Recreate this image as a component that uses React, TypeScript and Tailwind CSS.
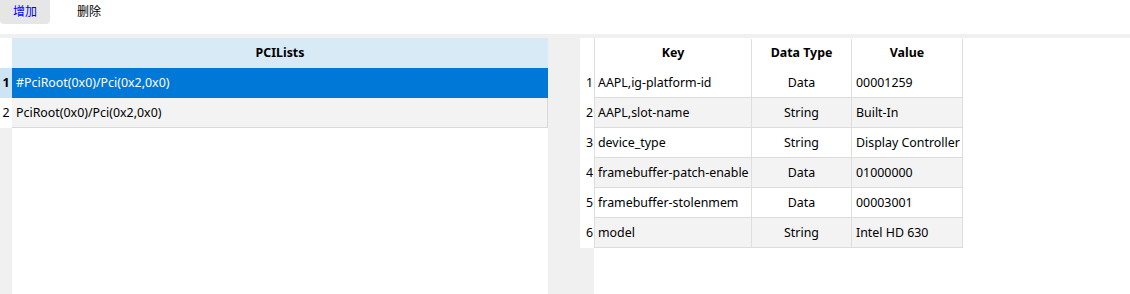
const pciRows = ['#PciRoot(0x0)/Pci(0x2,0x0)', 'PciRoot(0x0)/Pci(0x2,0x0)']

const props = [
  { key: 'AAPL,ig-platform-id', type: 'Data', value: '00001259' },
  { key: 'AAPL,slot-name', type: 'String', value: 'Built-In' },
  { key: 'device_type', type: 'String', value: 'Display Controller' },
  { key: 'framebuffer-patch-enable', type: 'Data', value: '01000000' },
  { key: 'framebuffer-stolenmem', type: 'Data', value: '00003001' },
  { key: 'model', type: 'String', value: 'Intel HD 630' },
]

export default function App() {
  return (
    <div
      className="flex h-[294px] w-full flex-col bg-white text-[12.4px] text-black"
      style={{ fontFamily: '"Noto Sans", "Noto Sans CJK SC", sans-serif' }}
    >
      {/* Toolbar */}
      <div className="flex h-[34px] items-start">
        <button className="flex h-6 w-[50px] items-center justify-center rounded-b bg-[#e6e6e6] text-[12px] text-[#0000ff]">
          增加
        </button>
        <button className="ml-[14px] flex h-6 w-[50px] items-center justify-center text-[12px]">删除</button>
      </div>
      <div className="h-1 bg-[#f0f0f0]" />

      <div className="flex flex-1">
        {/* PCI list */}
        <div className="flex w-[548px]">
          <div className="flex w-3 flex-col">
            <div className="h-[30px] bg-white" />
            <div className="flex h-[30px] items-center justify-center bg-[#cde4f5] pt-px font-bold">1</div>
            <div className="flex h-[30px] items-center justify-center bg-white pt-px">2</div>
            <div className="flex-1 bg-[#f0f0f0]" />
          </div>
          <div className="flex flex-1 flex-col">
            <div className="flex h-[30px] items-center justify-center bg-[#d9eaf7] pt-px font-bold">PCILists</div>
            {pciRows.map((r, i) => (
              <div
                key={r}
                className={
                  i === 0
                    ? 'flex h-[30px] items-center bg-[#0078d7] pt-px pl-1 text-white'
                    : 'flex h-[30px] items-center border-r border-b border-[#d9d9d9] bg-[#f3f3f3] pt-px pl-1'
                }
              >
                {r}
              </div>
            ))}
          </div>
        </div>

        <div className="w-8 bg-[#f0f0f0]" />

        {/* Properties */}
        <div className="flex flex-1">
          <div className="flex w-[14px] flex-col">
            <div className="h-[30px] bg-white" />
            {props.map((p, i) => (
              <div key={p.key} className="flex h-[30px] items-center justify-end bg-white pt-px pr-px">
                {i + 1}
              </div>
            ))}
            <div className="flex-1 bg-[#f0f0f0]" />
          </div>
          <div className="flex w-[369px] flex-col self-start border-l border-[#dedede]">
            <div className="grid h-[30px] grid-cols-[157px_100px_111px] pt-px font-bold">
              <div className="flex items-center justify-center border-r border-[#dedede]">Key</div>
              <div className="flex items-center justify-center border-r border-[#dedede]">Data Type</div>
              <div className="flex items-center justify-center border-r border-[#dedede]">Value</div>
            </div>
            {props.map((p, i) => (
              <div
                key={p.key}
                className={`grid h-[30px] grid-cols-[157px_100px_111px] border-b border-[#dcdcdc] ${
                  i % 2 === 1 ? 'bg-[#f3f3f3]' : 'bg-white'
                }`}
              >
                <div className="flex items-center border-r border-[#dedede] pt-px pl-[3px] whitespace-nowrap">{p.key}</div>
                <div className="flex items-center justify-center border-r border-[#dedede] pt-px">{p.type}</div>
                <div className="flex items-center border-r border-[#dedede] pt-px pl-[4px] whitespace-nowrap">{p.value}</div>
              </div>
            ))}
          </div>
        </div>
      </div>
    </div>
  )
}
